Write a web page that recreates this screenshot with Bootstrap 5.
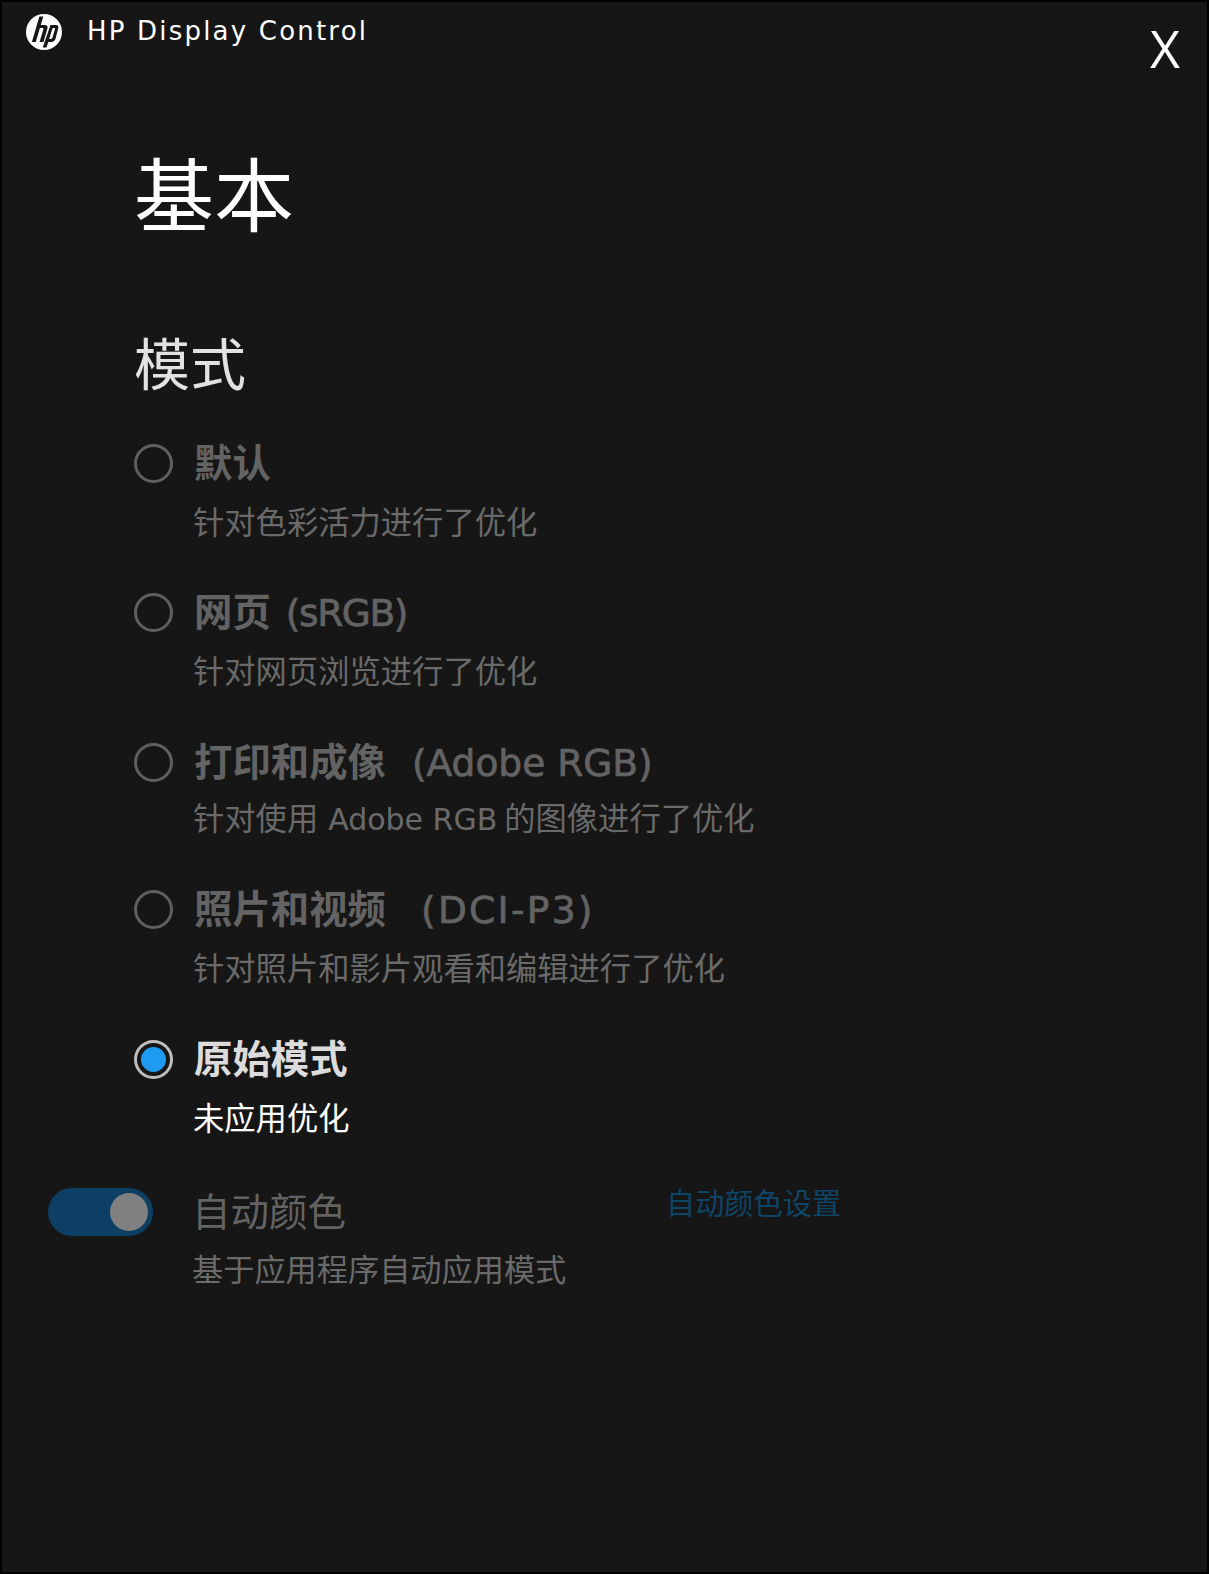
<!DOCTYPE html>
<html lang="zh-CN">
<head>
<meta charset="utf-8">
<title>HP Display Control</title>
<link href="https://cdn.jsdelivr.net/npm/bootstrap@5.3.0/dist/css/bootstrap.min.css" rel="stylesheet">
<style>
html, body { height: 100%; }
body { background: #000; font-family: "DejaVu Sans", "Noto Sans CJK SC", sans-serif; }
.app-shell { height: 1574px; background: #161616; border: 2px solid #000; border-radius: 3px; color: #fff; }
.top-bar { padding: 12px 0 0 24px; height: 128px; }
.hp-logo { width: 36px; height: 36px; flex: none; }
.app-name { font-size: 26px; letter-spacing: 2.2px; line-height: 34px; margin: 0 0 2px 25px; }
.close-x { font-family: "Open Sans", sans-serif; font-size: 52px; line-height: 60px; margin: 4px 27px 0 0; background: none; border: 0; color: #fff; padding: 0; }
.main-pane { padding-left: 132px; }
.page-title { font-size: 80px; line-height: 100px; margin: 10px 0 0; font-weight: 400; font-family: "Noto Sans CJK SC", sans-serif; }
.sect-title { font-size: 56px; line-height: 70px; margin: 86px 0 0; font-weight: 400; color: #e2e2e2; font-family: "Noto Sans CJK SC", sans-serif; }
.mode-list { margin-top: 42px; }
.mode-row { display: flex; margin: 0; height: 149px; }
.mode-row .form-check-input { width: 39px; height: 39px; margin: 6px 21px 0 0; flex: none; background-color: transparent; border: 3px solid #5f5f5f; float: none; }
.mode-row .form-check-input:checked { background-image: none; background-color: #1e9bf0; background-clip: content-box; padding: 4px; border-color: #bdbdbd; box-shadow: none; }
.mode-name { font-size: 38.4px; line-height: 52px; font-weight: 700; color: #636363; }
.mode-name .latin-bit { font-size: 37.5px; font-weight: 400; -webkit-text-stroke: .7px #636363; }
.latin-gap-s { margin-left: 15px; letter-spacing: -1.4px; }
.latin-gap-m { margin-left: 26px; }
.latin-gap-l { margin-left: 35px; letter-spacing: 2.3px; }
.mode-note { font-size: 31.3px; line-height: 44px; color: #6a6a6a; margin: 11px 0 0 -1px; }
.mode-note .latin-bit { font-size: 30px; margin-right: -3px; }
.mode-tight { height: 148px; padding-top: 1px; }
.mode-tight .mode-note { margin-top: 8px; }
.mode-roomy { height: 150px; }
.mode-on .mode-name { color: #dcdcdc; }
.mode-on .mode-note { color: #fff; }
.auto-row { padding-left: 46px; margin-top: 5px; }
.auto-row .form-check-input { width: 105px; height: 48px; margin: 0 39px 0 0; flex: none; float: none; border: 0; background-color: #0c3f63; background-position: right center; background-size: contain; background-image: url("data:image/svg+xml,%3Csvg xmlns='http://www.w3.org/2000/svg' viewBox='0 0 48 48'%3E%3Ccircle cx='24' cy='24' r='19' fill='%23808080'/%3E%3C/svg%3E"); }
.auto-name { font-size: 38.5px; line-height: 50px; color: #636363; width: 474px; }
.auto-link { font-size: 29.2px; line-height: 36px; color: #0e4466; text-decoration: none; margin-top: -2px; }
.auto-note { font-size: 31.2px; line-height: 44px; color: #6a6a6a; margin: 10px 0 0 0; }
</style>
</head>
<body>
<div class="app-shell d-flex flex-column">
  <header class="top-bar d-flex justify-content-between align-items-start">
    <div class="d-flex align-items-center">
      <svg class="hp-logo" viewBox="0 0 36 36" aria-label="HP">
        <circle cx="18" cy="18" r="18" fill="#fff"/>
        <path fill="#161616" fill-rule="evenodd" d="M13.4 2.6H17.3L14.8 11H18.8C21.3 11 22 12.5 21.4 14.6L17.5 28H13.6L17.3 15.4C17.6 14.4 17.2 14 16.3 14H13.9L9.8 28H5.9Z M24.5 11H29.6C32.1 11 32.8 12.5 32.2 14.6L29.6 24.5C28.9 26.8 27.6 28 25.1 28H22.2L20.6 33.5H16.7Z M26.6 14L23.1 25H24.8C25.7 25 26.2 24.5 26.5 23.6L28.9 15.4C29.2 14.4 28.8 14 27.9 14Z"/>
      </svg>
      <span class="app-name">HP Display Control</span>
    </div>
    <button class="close-x" type="button">X</button>
  </header>
  <main class="main-pane">
    <h1 class="page-title">基本</h1>
    <h2 class="sect-title">模式</h2>
    <div class="mode-list">
      <label class="mode-row"><input class="form-check-input" type="radio" name="mode"><span><div class="mode-name">默认</div><div class="mode-note">针对色彩活力进行了优化</div></span></label>
      <label class="mode-row"><input class="form-check-input" type="radio" name="mode"><span><div class="mode-name">网页<span class="latin-bit latin-gap-s">(sRGB)</span></div><div class="mode-note">针对网页浏览进行了优化</div></span></label>
      <label class="mode-row mode-tight"><input class="form-check-input" type="radio" name="mode"><span><div class="mode-name">打印和成像<span class="latin-bit latin-gap-m">(Adobe RGB)</span></div><div class="mode-note">针对使用 <span class="latin-bit">Adobe RGB</span> 的图像进行了优化</div></span></label>
      <label class="mode-row mode-roomy"><input class="form-check-input" type="radio" name="mode"><span><div class="mode-name">照片和视频<span class="latin-bit latin-gap-l">(DCI-P3)</span></div><div class="mode-note">针对照片和影片观看和编辑进行了优化</div></span></label>
      <label class="mode-row mode-on"><input class="form-check-input" type="radio" name="mode" checked><span><div class="mode-name">原始模式</div><div class="mode-note">未应用优化</div></span></label>
    </div>
  </main>
  <section class="auto-row form-switch d-flex">
    <input class="form-check-input" type="checkbox" role="switch" checked>
    <div>
      <div class="d-flex align-items-start">
        <div class="auto-name">自动颜色</div>
        <a class="auto-link" href="#">自动颜色设置</a>
      </div>
      <div class="auto-note">基于应用程序自动应用模式</div>
    </div>
  </section>
</div>
<script src="https://cdn.jsdelivr.net/npm/bootstrap@5.3.0/dist/js/bootstrap.bundle.min.js"></script>
</body>
</html>
